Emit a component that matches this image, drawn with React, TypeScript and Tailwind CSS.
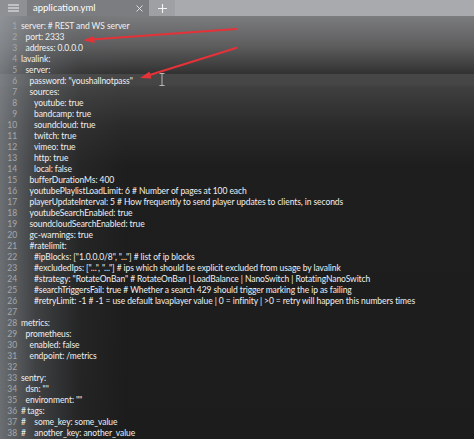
import React from 'react';

type Line = { indent: number; text: string; hash?: boolean };

const lines: Line[] = [
    { indent: 0, text: 'server: # REST and WS server' },
    { indent: 1, text: 'port: 2333' },
    { indent: 1, text: 'address: 0.0.0.0' },
    { indent: 0, text: 'lavalink:' },
    { indent: 1, text: 'server:' },
    { indent: 2, text: 'password: "youshallnotpass"' },
    { indent: 2, text: 'sources:' },
    { indent: 3, text: 'youtube: true' },
    { indent: 3, text: 'bandcamp: true' },
    { indent: 3, text: 'soundcloud: true' },
    { indent: 3, text: 'twitch: true' },
    { indent: 3, text: 'vimeo: true' },
    { indent: 3, text: 'http: true' },
    { indent: 3, text: 'local: false' },
    { indent: 2, text: 'bufferDurationMs: 400' },
    { indent: 2, text: 'youtubePlaylistLoadLimit: 6 # Number of pages at 100 each' },
    { indent: 2, text: 'playerUpdateInterval: 5 # How frequently to send player updates to clients, in seconds' },
    { indent: 2, text: 'youtubeSearchEnabled: true' },
    { indent: 2, text: 'soundcloudSearchEnabled: true' },
    { indent: 2, text: 'gc-warnings: true' },
    { indent: 2, text: '#ratelimit:' },
    { indent: 3, text: '#ipBlocks: ["1.0.0.0/8", "..."] # list of ip blocks' },
    { indent: 3, text: '#excludedIps: ["...", "..."] # ips which should be explicit excluded from usage by lavalink' },
    { indent: 3, text: '#strategy: "RotateOnBan" # RotateOnBan | LoadBalance | NanoSwitch | RotatingNanoSwitch' },
    { indent: 3, text: '#searchTriggersFail: true # Whether a search 429 should trigger marking the ip as failing' },
    { indent: 3, text: '#retryLimit: -1 # -1 = use default lavaplayer value | 0 = infinity | >0 = retry will happen this numbers times' },
    { indent: 0, text: '' },
    { indent: 0, text: 'metrics:' },
    { indent: 1, text: 'prometheus:' },
    { indent: 2, text: 'enabled: false' },
    { indent: 2, text: 'endpoint: /metrics' },
    { indent: 0, text: '' },
    { indent: 0, text: 'sentry:' },
    { indent: 1, text: 'dsn: ""' },
    { indent: 1, text: 'environment: ""' },
    { indent: 4, text: 'tags:', hash: true },
    { indent: 2, text: 'some_key: some_value', hash: true },
    { indent: 2, text: 'another_key: another_value', hash: true },
];

const indentClass = ['pl-0', 'pl-[4.5px]', 'pl-[8.5px]', 'pl-[13px]', 'pl-[1.5px]'];

function TabBar() {
    return (
        <div className="flex h-[19px] bg-[#a8aaad] text-white">
            <div className="w-[27px] bg-[#8e9093] flex items-center justify-center">
                <svg width="11" height="8" viewBox="0 0 11 8" fill="none" stroke="#f2f2f2" strokeWidth="1">
                    <path d="M0 1h11M0 4h11M0 7h11" />
                </svg>
            </div>
            <div className="w-[122px] bg-[#7b7d80] flex items-center pl-[6px] pr-[6px]">
                <span className="text-[9.5px] flex-1">application.yml</span>
                <svg width="7" height="7" viewBox="0 0 7 7" stroke="#e8e8e8" strokeWidth="0.9">
                    <path d="M0.5 0.5l6 6M6.5 0.5l-6 6" />
                </svg>
            </div>
            <div className="w-[26px] bg-[#9ea0a3] flex items-center justify-center">
                <svg width="9" height="9" viewBox="0 0 9 9" stroke="#f5f5f5" strokeWidth="1.1">
                    <path d="M4.5 0v9M0 4.5h9" />
                </svg>
            </div>
            <div className="flex-1" />
        </div>
    );
}

export default function App() {
    return (
        <div
            className="w-[474px] h-[439px] overflow-hidden bg-[#1c1c1c] flex flex-col"
            style={{ fontFamily: 'Lato, "Noto Sans", sans-serif' }}
        >
            <TabBar />
            <div className="relative flex-1 bg-[linear-gradient(to_right,rgba(155,161,167,0.62)_0px,rgba(125,130,136,0.36)_35px,rgba(90,94,98,0.12)_80px,rgba(0,0,0,0)_125px),linear-gradient(to_bottom,#7b7c7e_0px,#5d5d5e_30px,#333333_57px,#333333_58px,#474747_58px,#454545_69px,#3f3f3f_71px,#2a2a2a_110px,#1e1e1e_150px,#1c1c1c_100%)]">
                <div className="pt-[5px]">
                    {lines.map((line, i) => (
                        <div key={i} className="flex h-[11px] items-center leading-[11px] text-[8.5px] tracking-[-0.08px]">
                            <span className="w-[17px] text-right text-[#a4a8ad] shrink-0">{i + 1}</span>
                            <span className="pl-[4px] flex whitespace-pre text-[#f0f0f0]">
                                {line.hash && <span>#</span>}
                                <span className={indentClass[line.indent]}>{line.text}</span>
                            </span>
                        </div>
                    ))}
                </div>
                {/* annotation arrows */}
                <svg className="absolute left-0 top-0" width="474" height="100" viewBox="0 19 474 100">
                    <g stroke="#e53238" strokeWidth="2.2" strokeLinecap="round">
                        <line x1="236" y1="32" x2="92" y2="42.5" />
                        <line x1="236" y1="51" x2="148" y2="78.5" />
                    </g>
                    <g fill="#e53238">
                        <polygon points="83,43.3 94,39 94.6,46" />
                        <polygon points="140,81 149.5,74.5 151.5,81.5" />
                    </g>
                    {/* text cursor */}
                    <g stroke="#b8b8b8" strokeWidth="1" fill="none">
                        <path d="M162 77v11M159.5 76.5h5M159.5 88.5h5" />
                    </g>
                </svg>
            </div>
        </div>
    );
}
